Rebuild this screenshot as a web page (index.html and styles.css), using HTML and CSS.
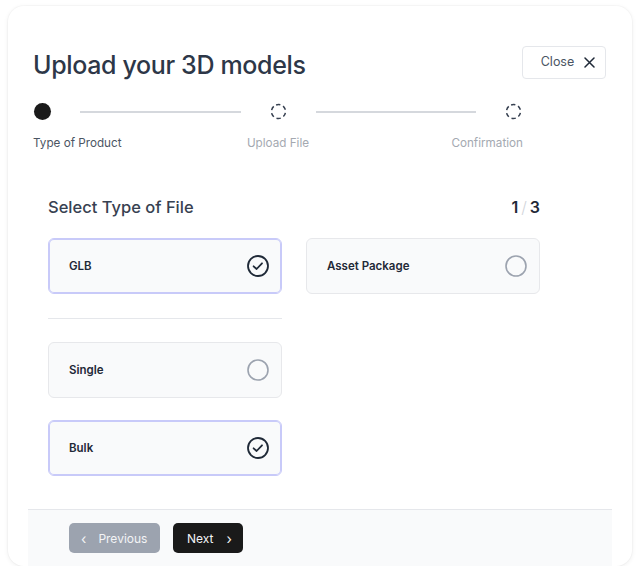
FILE: index.html
```html
<!DOCTYPE html>
<html>
<head>
<meta charset="utf-8">
<link rel="stylesheet" href="styles.css">
</head>
<body>
<div class="modal">
  <div class="header">
    <h1 class="title">Upload your 3D models</h1>
    <button class="close-btn">Close
      <svg class="close-icon" width="11" height="11" viewBox="0 0 11 11"><path d="M1 1L10 10M10 1L1 10" stroke="#1f2937" stroke-width="1.5" stroke-linecap="round"/></svg>
    </button>
  </div>

  <div class="stepper">
    <div class="step-row">
      <span class="dot-filled"></span>
      <span class="step-line"></span>
      <svg class="dot-dashed" width="17" height="17" viewBox="0 0 17 17"><circle cx="8.5" cy="8.5" r="7" fill="none" stroke="#374151" stroke-width="1.5" stroke-dasharray="4.3 3.03" transform="rotate(-110 8.5 8.5)"/></svg>
      <span class="step-line"></span>
      <svg class="dot-dashed" width="17" height="17" viewBox="0 0 17 17"><circle cx="8.5" cy="8.5" r="7" fill="none" stroke="#374151" stroke-width="1.5" stroke-dasharray="4.3 3.03" transform="rotate(-110 8.5 8.5)"/></svg>
    </div>
    <div class="step-labels">
      <span class="step-label first active">Type of Product</span>
      <span class="step-label mid">Upload File</span>
      <span class="step-label last">Confirmation</span>
    </div>
  </div>

  <div class="section">
    <div class="section-head">
      <h2 class="section-title">Select Type of File</h2>
      <div class="counter"><span>1</span><span class="slash">/</span><span>3</span></div>
    </div>
    <div class="options">
      <div class="col">
        <div class="option selected">
          <span class="opt-label">GLB</span>
          <svg class="opt-icon" width="24" height="24" viewBox="0 0 24 24"><circle cx="12" cy="12" r="10" fill="none" stroke="#1f2937" stroke-width="1.8"/><path d="M7.6 12.3L10.6 15L16 9.3" fill="none" stroke="#1f2937" stroke-width="1.8" stroke-linecap="round" stroke-linejoin="round"/></svg>
        </div>
        <div class="divider"></div>
        <div class="option">
          <span class="opt-label">Single</span>
          <svg class="opt-icon" width="24" height="24" viewBox="0 0 24 24"><circle cx="12" cy="12" r="10" fill="none" stroke="#9ca3af" stroke-width="1.6"/></svg>
        </div>
        <div class="option selected bulk">
          <span class="opt-label">Bulk</span>
          <svg class="opt-icon" width="24" height="24" viewBox="0 0 24 24"><circle cx="12" cy="12" r="10" fill="none" stroke="#1f2937" stroke-width="1.8"/><path d="M7.6 12.3L10.6 15L16 9.3" fill="none" stroke="#1f2937" stroke-width="1.8" stroke-linecap="round" stroke-linejoin="round"/></svg>
        </div>
      </div>
      <div class="col">
        <div class="option">
          <span class="opt-label">Asset Package</span>
          <svg class="opt-icon" width="24" height="24" viewBox="0 0 24 24"><circle cx="12" cy="12" r="10" fill="none" stroke="#9ca3af" stroke-width="1.6"/></svg>
        </div>
      </div>
    </div>
  </div>

  <div class="footer">
    <button class="btn btn-prev"><span class="chev">‹</span>Previous</button>
    <button class="btn btn-next">Next<span class="chev">›</span></button>
  </div>
</div>
</body>
</html>
```

FILE: styles.css
```css
* { box-sizing: border-box; }
html, body { margin: 0; padding: 0; background: #ffffff; }
body { font-family: Inter, "Noto Sans", sans-serif; color: #1f2937; }

.modal {
  margin: 6px 8px 0 8px;
  width: 624px;
  height: 560px;
  border-radius: 16px;
  background: #fff;
  box-shadow: 0 1px 5px rgba(0, 0, 0, 0.07), 0 0 0 1px rgba(0, 0, 0, 0.02);
  padding: 0 20px;
  display: flex;
  flex-direction: column;
  overflow: hidden;
}

.header {
  display: flex;
  justify-content: space-between;
  align-items: flex-start;
  margin-top: 40px;
  padding: 0 6px 0 5px;
}
.title {
  margin: 0;
  padding-top: 3px;
  font-size: 25px;
  line-height: 32px;
  font-weight: 500;
  color: #2d3748;
  letter-spacing: -0.35px;
}
.close-btn {
  width: 84px;
  height: 33px;
  border: 1px solid #e5e7eb;
  border-radius: 4px;
  background: #fff;
  font-family: inherit;
  font-size: 12.5px;
  color: #4b5563;
  display: flex;
  align-items: center;
  justify-content: center;
  gap: 10px;
  padding: 0 0 2px 8px;
}
.close-icon { margin-top: 2px; }

.stepper {
  margin: 22px 0 0 5px;
  width: 490px;
}
.step-row {
  display: flex;
  align-items: center;
  padding-left: 1px;
  padding-right: 1px;
}
.dot-filled {
  width: 17px;
  height: 17px;
  border-radius: 50%;
  background: #1a1a1a;
  flex: none;
}
.dot-dashed { flex: none; display: block; }
.step-line {
  flex: 1;
  height: 2px;
  background: #d5d8dd;
  margin: 0 29px;
}
.step-labels {
  display: grid;
  grid-template-columns: 1fr 1fr 1fr;
  margin-top: 15px;
}
.step-label {
  font-size: 11.7px;
  line-height: 16px;
  color: #a4a9b1;
  white-space: nowrap;
}
.step-label.first { justify-self: start; }
.step-label.mid { justify-self: center; }
.step-label.last { justify-self: end; }
.step-label.active { color: #4b5563; }

.section {
  margin: 44px 0 0 20px;
  width: 492px;
}
.section-head {
  display: flex;
  justify-content: space-between;
  align-items: center;
  height: 24px;
}
.section-title {
  margin: 0;
  font-size: 16.5px;
  font-weight: 500;
  color: #374151;
}
.counter {
  font-size: 16px;
  font-weight: 600;
  color: #1f2937;
  display: flex;
  gap: 3px;
}
.counter .slash { color: #d1d5db; font-weight: 300; }

.options {
  display: grid;
  grid-template-columns: 234px 234px;
  gap: 24px;
  margin-top: 19px;
}
.col { display: flex; flex-direction: column; }
.option {
  height: 56px;
  border: 1px solid #e7e8eb;
  border-radius: 6px;
  background: #f9fafb;
  display: flex;
  align-items: center;
  justify-content: space-between;
  padding: 0 11px 0 20px;
}
.option.selected {
  border-color: #c8caf9;
  box-shadow: inset 0 0 0 1px #c8caf9;
}
.opt-label {
  font-size: 11.5px;
  font-weight: 600;
  color: #1f2937;
}
.opt-icon { display: block; }
.divider {
  height: 1px;
  background: #e5e7eb;
  margin: 24px 0 23px 0;
}
.bulk { margin-top: 22px; }

.footer {
  margin-top: auto;
  height: 57px;
  background: #f9fafb;
  border-top: 1px solid #e5e7eb;
  display: flex;
  align-items: center;
  gap: 13px;
  padding: 0 0 0 41px;
}
.btn {
  height: 30px;
  border: none;
  border-radius: 5px;
  font-family: inherit;
  font-size: 12px;
  display: flex;
  align-items: center;
}
.btn-prev {
  width: 91px;
  background: #9ca3af;
  color: #f3f4f6;
  padding: 0 0 0 12px;
}
.btn-prev .chev { margin-right: 12px; font-size: 14px; }
.btn-next {
  width: 70px;
  background: #1a1a1a;
  color: #f3f4f6;
  padding: 0 0 0 14px;
}
.btn-next .chev { margin-left: 13px; font-size: 14px; }
```
